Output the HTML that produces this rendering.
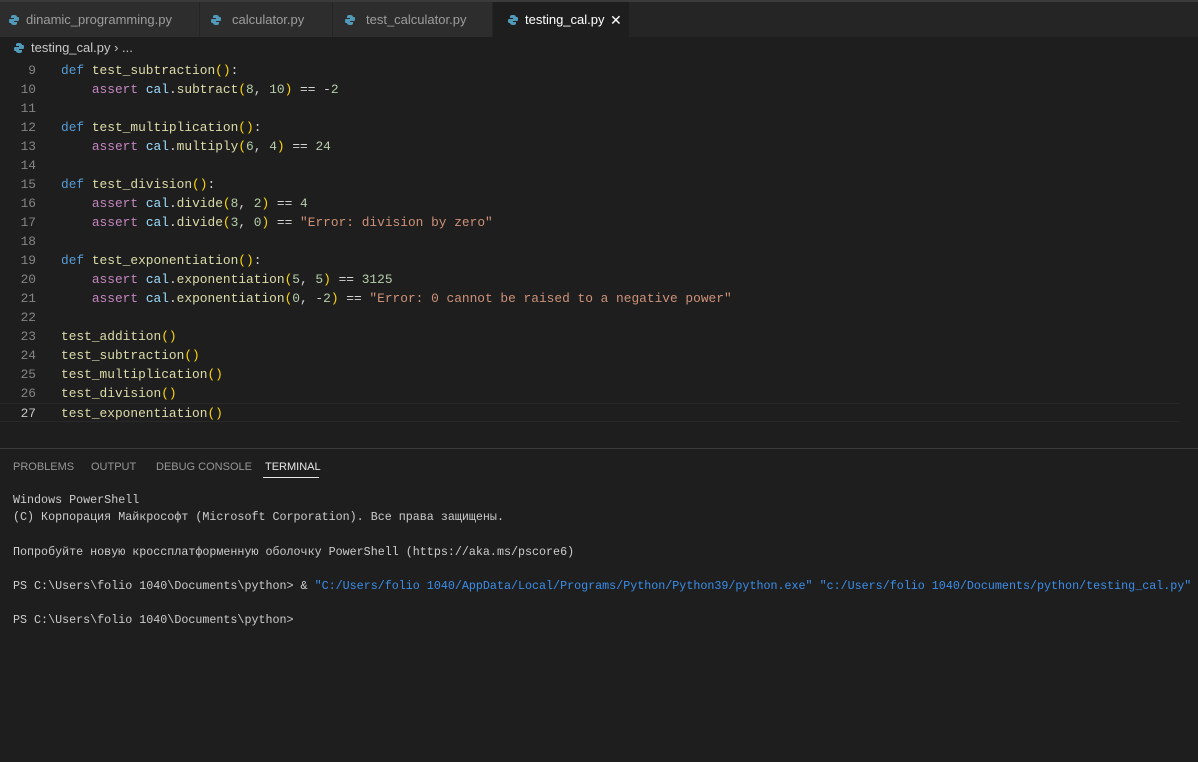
<!DOCTYPE html>
<html><head><meta charset="utf-8"><style>
*{margin:0;padding:0;box-sizing:border-box}
body{width:1198px;height:762px;background:#1e1e1e;overflow:hidden;font-family:"Liberation Sans",sans-serif;position:relative}
.tabs{position:absolute;top:0;left:0;width:1198px;height:37px;background:#252526;border-top:2px solid #3a3a3a}
.tab{position:absolute;top:0;height:35px;background:#2d2d2d;color:#9d9d9d;font-size:13px;line-height:36px;padding-left:26px;border-right:1px solid #252526}
.tab.act{background:#1e1e1e;color:#fff}
.py{position:absolute;left:9px;top:13px;width:10px;height:10px}
.bc{position:absolute;top:38px;left:14px;color:#c8c8c8;font-size:13px;line-height:20px;padding-left:17px}
.code{position:absolute;top:61px;left:0;width:1180px;font-family:"Liberation Mono",monospace;font-size:12.85px}
.ln{height:19px;line-height:19px;white-space:pre;position:relative}
.ln .n{position:absolute;left:0;width:36px;text-align:right;color:#858585}
.ln .t{position:absolute;left:61px;color:#d4d4d4}
.cur{border-top:1px solid #282828;border-bottom:1px solid #282828}
.k{color:#569cd6}.f{color:#dcdcaa}.p{color:#c586c0}.v{color:#9cdcfe}.num{color:#b5cea8}.s{color:#ce9178}.b{color:#ffd700}
.panel{position:absolute;top:448px;left:0;width:1198px;height:314px;border-top:1px solid #3c3c3c}
.ptab{position:absolute;top:12px;font-size:11px;color:#969696}
.term{position:absolute;top:43px;left:13px;font-family:"Liberation Mono",monospace;font-size:11.7px;color:#cccccc;white-space:pre;line-height:17.2px}
</style></head><body>
<div class="tabs">
<div class="tab" style="left:0;width:200px"><svg class="py" viewBox="0 0 10 10"><path d="M5 0C2 0 2 1 2 2v1h3v1H1C0 4 0 5 0 6s0 2 1 2h1V6c0-1 1-1 2-1h3c1 0 1-1 1-1V2C8 1 7 0 5 0z" fill="#519aba"/><path d="M5 10c3 0 3-1 3-2V7H5V6h4c1 0 1-1 1-2s0-2-1-2H8v2c0 1-1 1-2 1H3C2 5 2 6 2 6v2c0 1 1 2 3 2z" fill="#519aba"/></svg>dinamic_programming.py</div>
<div class="tab" style="left:200px;width:133px;padding-left:32px"><svg class="py" style="left:11px" viewBox="0 0 10 10"><path d="M5 0C2 0 2 1 2 2v1h3v1H1C0 4 0 5 0 6s0 2 1 2h1V6c0-1 1-1 2-1h3c1 0 1-1 1-1V2C8 1 7 0 5 0z" fill="#519aba"/><path d="M5 10c3 0 3-1 3-2V7H5V6h4c1 0 1-1 1-2s0-2-1-2H8v2c0 1-1 1-2 1H3C2 5 2 6 2 6v2c0 1 1 2 3 2z" fill="#519aba"/></svg>calculator.py</div>
<div class="tab" style="left:333px;width:160px;padding-left:33px"><svg class="py" style="left:12px" viewBox="0 0 10 10"><path d="M5 0C2 0 2 1 2 2v1h3v1H1C0 4 0 5 0 6s0 2 1 2h1V6c0-1 1-1 2-1h3c1 0 1-1 1-1V2C8 1 7 0 5 0z" fill="#519aba"/><path d="M5 10c3 0 3-1 3-2V7H5V6h4c1 0 1-1 1-2s0-2-1-2H8v2c0 1-1 1-2 1H3C2 5 2 6 2 6v2c0 1 1 2 3 2z" fill="#519aba"/></svg>test_calculator.py</div>
<div class="tab act" style="left:493px;width:137px;padding-left:32px"><svg class="py" style="left:15px" viewBox="0 0 10 10"><path d="M5 0C2 0 2 1 2 2v1h3v1H1C0 4 0 5 0 6s0 2 1 2h1V6c0-1 1-1 2-1h3c1 0 1-1 1-1V2C8 1 7 0 5 0z" fill="#519aba"/><path d="M5 10c3 0 3-1 3-2V7H5V6h4c1 0 1-1 1-2s0-2-1-2H8v2c0 1-1 1-2 1H3C2 5 2 6 2 6v2c0 1 1 2 3 2z" fill="#519aba"/></svg>testing_cal.py <span style="position:absolute;left:117px;font-size:14px">✕</span></div>
</div>
<div class="bc"><svg class="py" style="left:0;top:5px" viewBox="0 0 10 10"><path d="M5 0C2 0 2 1 2 2v1h3v1H1C0 4 0 5 0 6s0 2 1 2h1V6c0-1 1-1 2-1h3c1 0 1-1 1-1V2C8 1 7 0 5 0z" fill="#519aba"/><path d="M5 10c3 0 3-1 3-2V7H5V6h4c1 0 1-1 1-2s0-2-1-2H8v2c0 1-1 1-2 1H3C2 5 2 6 2 6v2c0 1 1 2 3 2z" fill="#519aba"/></svg>testing_cal.py › ...</div>
<div class="code">
<div class="ln"><span class="n">9</span><span class="t"><span class="k">def</span> <span class="f">test_subtraction</span><span class="b">()</span>:</span></div>
<div class="ln"><span class="n">10</span><span class="t">    <span class="p">assert</span> <span class="v">cal</span>.<span class="f">subtract</span><span class="b">(</span><span class="num">8</span>, <span class="num">10</span><span class="b">)</span> == -<span class="num">2</span></span></div>
<div class="ln"><span class="n">11</span></div>
<div class="ln"><span class="n">12</span><span class="t"><span class="k">def</span> <span class="f">test_multiplication</span><span class="b">()</span>:</span></div>
<div class="ln"><span class="n">13</span><span class="t">    <span class="p">assert</span> <span class="v">cal</span>.<span class="f">multiply</span><span class="b">(</span><span class="num">6</span>, <span class="num">4</span><span class="b">)</span> == <span class="num">24</span></span></div>
<div class="ln"><span class="n">14</span></div>
<div class="ln"><span class="n">15</span><span class="t"><span class="k">def</span> <span class="f">test_division</span><span class="b">()</span>:</span></div>
<div class="ln"><span class="n">16</span><span class="t">    <span class="p">assert</span> <span class="v">cal</span>.<span class="f">divide</span><span class="b">(</span><span class="num">8</span>, <span class="num">2</span><span class="b">)</span> == <span class="num">4</span></span></div>
<div class="ln"><span class="n">17</span><span class="t">    <span class="p">assert</span> <span class="v">cal</span>.<span class="f">divide</span><span class="b">(</span><span class="num">3</span>, <span class="num">0</span><span class="b">)</span> == <span class="s">"Error: division by zero"</span></span></div>
<div class="ln"><span class="n">18</span></div>
<div class="ln"><span class="n">19</span><span class="t"><span class="k">def</span> <span class="f">test_exponentiation</span><span class="b">()</span>:</span></div>
<div class="ln"><span class="n">20</span><span class="t">    <span class="p">assert</span> <span class="v">cal</span>.<span class="f">exponentiation</span><span class="b">(</span><span class="num">5</span>, <span class="num">5</span><span class="b">)</span> == <span class="num">3125</span></span></div>
<div class="ln"><span class="n">21</span><span class="t">    <span class="p">assert</span> <span class="v">cal</span>.<span class="f">exponentiation</span><span class="b">(</span><span class="num">0</span>, -<span class="num">2</span><span class="b">)</span> == <span class="s">"Error: 0 cannot be raised to a negative power"</span></span></div>
<div class="ln"><span class="n">22</span></div>
<div class="ln"><span class="n">23</span><span class="t"><span class="f">test_addition</span><span class="b">()</span></span></div>
<div class="ln"><span class="n">24</span><span class="t"><span class="f">test_subtraction</span><span class="b">()</span></span></div>
<div class="ln"><span class="n">25</span><span class="t"><span class="f">test_multiplication</span><span class="b">()</span></span></div>
<div class="ln"><span class="n">26</span><span class="t"><span class="f">test_division</span><span class="b">()</span></span></div>
<div class="ln cur"><span class="n" style="color:#c6c6c6">27</span><span class="t"><span class="f">test_exponentiation</span><span class="b">()</span></span></div>
</div>
<div class="panel">
<span class="ptab" style="left:13px">PROBLEMS</span>
<span class="ptab" style="left:91px">OUTPUT</span>
<span class="ptab" style="left:156px">DEBUG CONSOLE</span>
<span class="ptab" style="left:265px;color:#e7e7e7">TERMINAL</span>
<div style="position:absolute;left:263px;top:28px;width:56px;height:1px;background:#e7e7e7"></div>
<div class="term">Windows PowerShell
(C) Корпорация Майкрософт (Microsoft Corporation). Все права защищены.

Попробуйте новую кроссплатформенную оболочку PowerShell (https://aka.ms/pscore6)

PS C:\Users\folio 1040\Documents\python&gt; &amp; <span style="color:#3b8eea">"C:/Users/folio 1040/AppData/Local/Programs/Python/Python39/python.exe"</span> <span style="color:#3b8eea">"c:/Users/folio 1040/Documents/python/testing_cal.py"</span>

PS C:\Users\folio 1040\Documents\python&gt;</div>
</div>
</body></html>
